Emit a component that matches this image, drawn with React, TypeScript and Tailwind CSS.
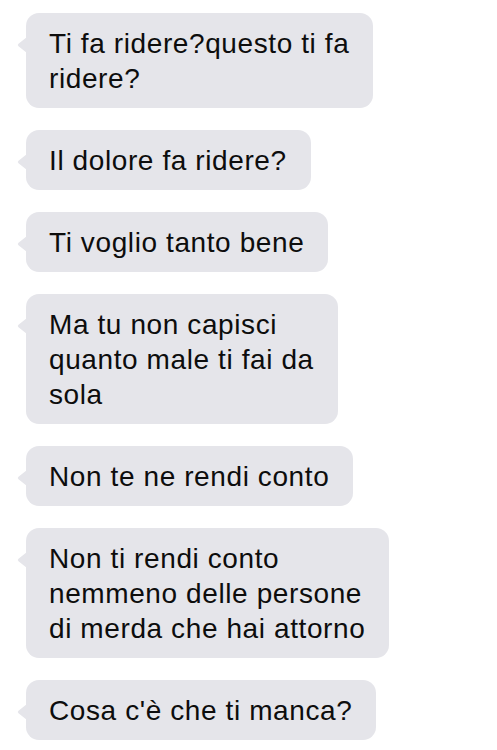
const messages: string[][] = [
  ['Ti fa ridere?questo ti fa', 'ridere?'],
  ['Il dolore fa ridere?'],
  ['Ti voglio tanto bene'],
  ['Ma tu non capisci', 'quanto male ti fai da', 'sola'],
  ['Non te ne rendi conto'],
  ['Non ti rendi conto', 'nemmeno delle persone', 'di merda che hai attorno'],
  ["Cosa c'è che ti manca?"],
]

function Bubble({ lines }: { lines: string[] }) {
  return (
    <div className="relative self-start">
      <svg
        className="absolute left-[-9px] top-[24px]"
        width="10"
        height="16"
        viewBox="0 0 10 16"
      >
        <path d="M10 0 L10 16 L1.5 9.2 Q0 8 1.5 6.8 Z" fill="#e5e5ea" />
      </svg>
      <div className="bg-[#e5e5ea] rounded-[13px] pl-[23px] pr-[24px] pt-[13px] pb-[12px] text-[28px] leading-[35px] tracking-[0.6px] text-[#0d0d0d] whitespace-nowrap">
        {lines.map((line, i) => (
          <div key={i}>{line}</div>
        ))}
      </div>
    </div>
  )
}

export default function App() {
  return (
    <div
      className="w-[497px] h-[750px] bg-white overflow-hidden flex flex-col gap-[22px] pl-[26px] pt-[13px]"
      style={{ fontFamily: '"Liberation Sans", Arial, sans-serif' }}
    >
      {messages.map((lines, idx) => (
        <Bubble key={idx} lines={lines} />
      ))}
    </div>
  )
}
